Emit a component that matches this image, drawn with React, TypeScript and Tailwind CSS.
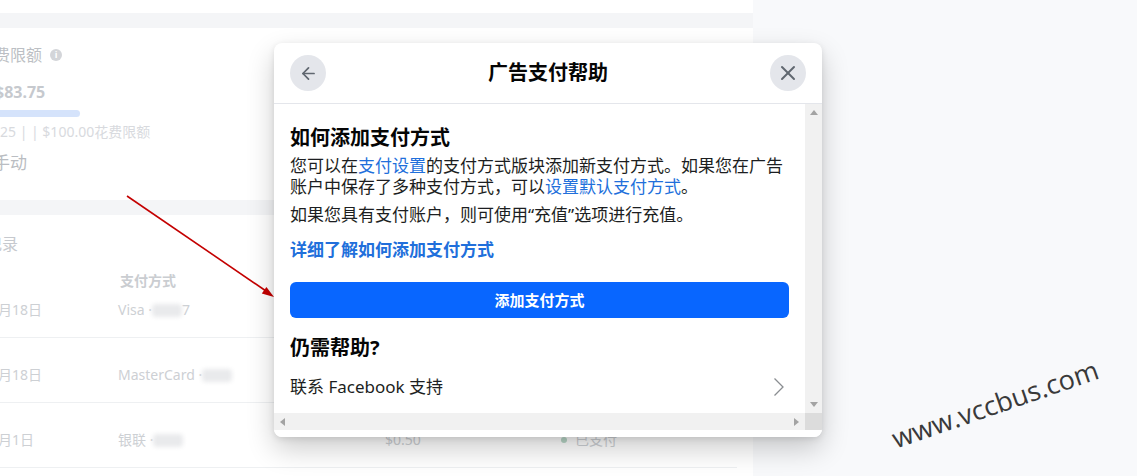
import { ArrowLeft, X } from 'lucide-react'

const font = "font-['Noto_Sans','Noto_Sans_CJK_SC',sans-serif]"

function BackgroundPage() {
  return (
    <div className="w-[753px] shrink-0 flex flex-col">
      <div className="h-[13px] bg-white" />
      <div className="h-[15px] bg-[#f4f5f7]" />

      {/* 花费限额 card */}
      <div className="h-[172px] bg-white pt-[15px] flex flex-col">
        <div className="flex items-center gap-[8px] -ml-[22px] h-[24px] text-[16px] text-[#bcbfc4]">
          <span>花费限额</span>
          <span className="w-[12px] h-[12px] rounded-full bg-[#d3d5d9] text-white text-[9px] leading-[12px] text-center font-bold">i</span>
        </div>
        <div className="mt-[15px] -ml-[5px] h-[20px] leading-[20px] text-[16px] font-bold text-[#c6c9ce]">$83.75</div>
        <div className="mt-[8px] w-[80px] h-[7px] rounded-r-full bg-[#d5e3fb]" />
        <div className="mt-[6px] h-[18px] leading-[18px] text-[14px] text-[#d8dade]">25 | | $100.00花费限额</div>
        <div className="mt-[11px] -ml-[7px] h-[22px] leading-[22px] text-[17px] text-[#babdc2]">手动</div>
      </div>

      <div className="h-[15px] bg-[#f4f5f7]" />

      {/* 付款记录 card */}
      <div className="flex-1 bg-white pt-[17px] pr-[16px]">
        <div className="-ml-[14px] h-[24px] leading-[24px] text-[16px] text-[#c6c9ce]">记录</div>
        <div className="mt-[15px] h-[20px] leading-[20px] flex text-[14px] font-semibold text-[#cacdd1]">
          <span className="w-[120px]" />
          <span>支付方式</span>
        </div>
        <Row date="月18日" pay="Visa · " tail="7" first />
        <Row date="月18日" pay="MasterCard · " tail="" />
        <Row date="月1日" pay="银联 · " tail="" />
      </div>
    </div>
  )
}

function Row({ date, pay, tail, first }: { date: string; pay: string; tail: string; first?: boolean }) {
  return (
    <div
      className={
        (first ? 'h-[47px] pt-[9px] ' : 'h-[65px] pt-[27px] ') +
        'border-b border-[#eef0f2] flex items-start text-[14px] leading-[20px] text-[#cdd0d4]'
      }
    >
      <span className="w-[120px] -ml-[2px] h-[20px]">{date}</span>
      <span className="w-[267px] h-[20px] flex items-center">
        {pay}
        <span className="inline-block w-[30px] h-[13px] rounded bg-[#e9eaec] blur-[2px]" />
        <span>{tail}</span>
      </span>
      <span className="w-[176px] h-[20px]">$0.50</span>
      <span className="h-[20px] flex items-center gap-[8px]">
        <span className="w-[6px] h-[6px] rounded-full bg-[#b9d8c8]" />
        已支付
      </span>
    </div>
  )
}

function HelpDialog() {
  return (
    <div className="absolute left-[274px] top-[43px] w-[548px] h-[394px] rounded-lg bg-white shadow-[0_12px_28px_0_rgba(0,0,0,0.2),0_2px_6px_0_rgba(0,0,0,0.1)] flex flex-col overflow-hidden">
      <div className="h-[61px] shrink-0 border-b border-[#e4e6eb] px-4 flex items-center justify-between">
        <button className="w-[36px] h-[36px] rounded-full bg-[#e4e6eb] flex items-center justify-center text-[#606770]">
          <ArrowLeft size={19} strokeWidth={2.2} />
        </button>
        <h1 className="text-[20px] leading-[24px] font-bold text-[#050505]">广告支付帮助</h1>
        <button className="w-[36px] h-[36px] rounded-full bg-[#e4e6eb] flex items-center justify-center text-[#606770]">
          <X size={24} strokeWidth={2} />
        </button>
      </div>

      <div className="h-[309px] shrink-0 flex">
        <div className="flex-1 px-4 pt-[22px] text-[#1c1e21]">
          <h2 className="text-[20px] leading-[24px] font-bold text-[#050505]">如何添加支付方式</h2>
          <p className="mt-[5px] text-[17px] leading-[21px]">
            您可以在<span className="text-[#216fdb]">支付设置</span>的支付方式版块添加新支付方式。如果您在广告账户中保存了多种支付方式，可以
            <span className="text-[#216fdb]">设置默认支付方式</span>。
          </p>
          <p className="mt-[7px] text-[17px] leading-[21px]">如果您具有支付账户，则可使用“充值”选项进行充值。</p>
          <div className="mt-[14px] text-[17px] leading-[22px] font-bold text-[#216fdb]">详细了解如何添加支付方式</div>
          <button className="mt-[21px] w-full h-[36px] rounded-md bg-[#0866ff] text-white text-[15px] font-bold">
            添加支付方式
          </button>
          <h2 className="mt-[18px] text-[20px] leading-[24px] font-bold text-[#050505]">仍需帮助?</h2>
          <div className="mt-[16px] h-[22px] flex items-center justify-between">
            <span className="text-[17px] leading-[22px]">联系 Facebook 支持</span>
            <svg width="12" height="20" viewBox="0 0 12 20" className="mr-[4px]">
              <path d="M1.5 1.5 L10 10 L1.5 18.5" fill="none" stroke="#8a8d91" strokeWidth="1.3" />
            </svg>
          </div>
        </div>
        {/* vertical scrollbar */}
        <div className="w-[17px] bg-[#f1f1f1] flex flex-col items-center justify-between py-[6px]">
          <svg width="8" height="5" viewBox="0 0 8 5"><polygon points="4,0 8,5 0,5" fill="#a3a3a3" /></svg>
          <svg width="8" height="5" viewBox="0 0 8 5"><polygon points="0,0 8,0 4,5" fill="#a3a3a3" /></svg>
        </div>
      </div>

      {/* horizontal scrollbar */}
      <div className="h-[17px] shrink-0 flex">
        <div className="flex-1 bg-[#f1f1f1] flex items-center justify-between px-[6px]">
          <svg width="5" height="8" viewBox="0 0 5 8"><polygon points="5,0 5,8 0,4" fill="#a3a3a3" /></svg>
          <svg width="5" height="8" viewBox="0 0 5 8"><polygon points="0,0 5,4 0,8" fill="#a3a3a3" /></svg>
        </div>
        <div className="w-[17px] bg-[#dcdcdc]" />
      </div>
      <div className="flex-1 bg-white" />
    </div>
  )
}

export default function App() {
  return (
    <div className={'relative w-[1137px] h-[476px] overflow-hidden bg-[#f8f9fb] flex ' + font}>
      <BackgroundPage />

      {/* red pointer arrow */}
      <svg className="absolute left-0 top-0 pointer-events-none" width="1137" height="476">
        <line x1="127" y1="196" x2="266" y2="291" stroke="#c40000" strokeWidth="1.6" />
        <polygon points="274,297 261.8,293.5 266.4,286.9" fill="#c40000" />
      </svg>

      <HelpDialog />

      <div className="absolute left-[875px] top-[385px] w-[240px] text-center -rotate-[19deg] font-['Open_Sans',sans-serif] text-[27px] leading-[38px] text-[#3a3a3a]">
        www.vccbus.com
      </div>
    </div>
  )
}
